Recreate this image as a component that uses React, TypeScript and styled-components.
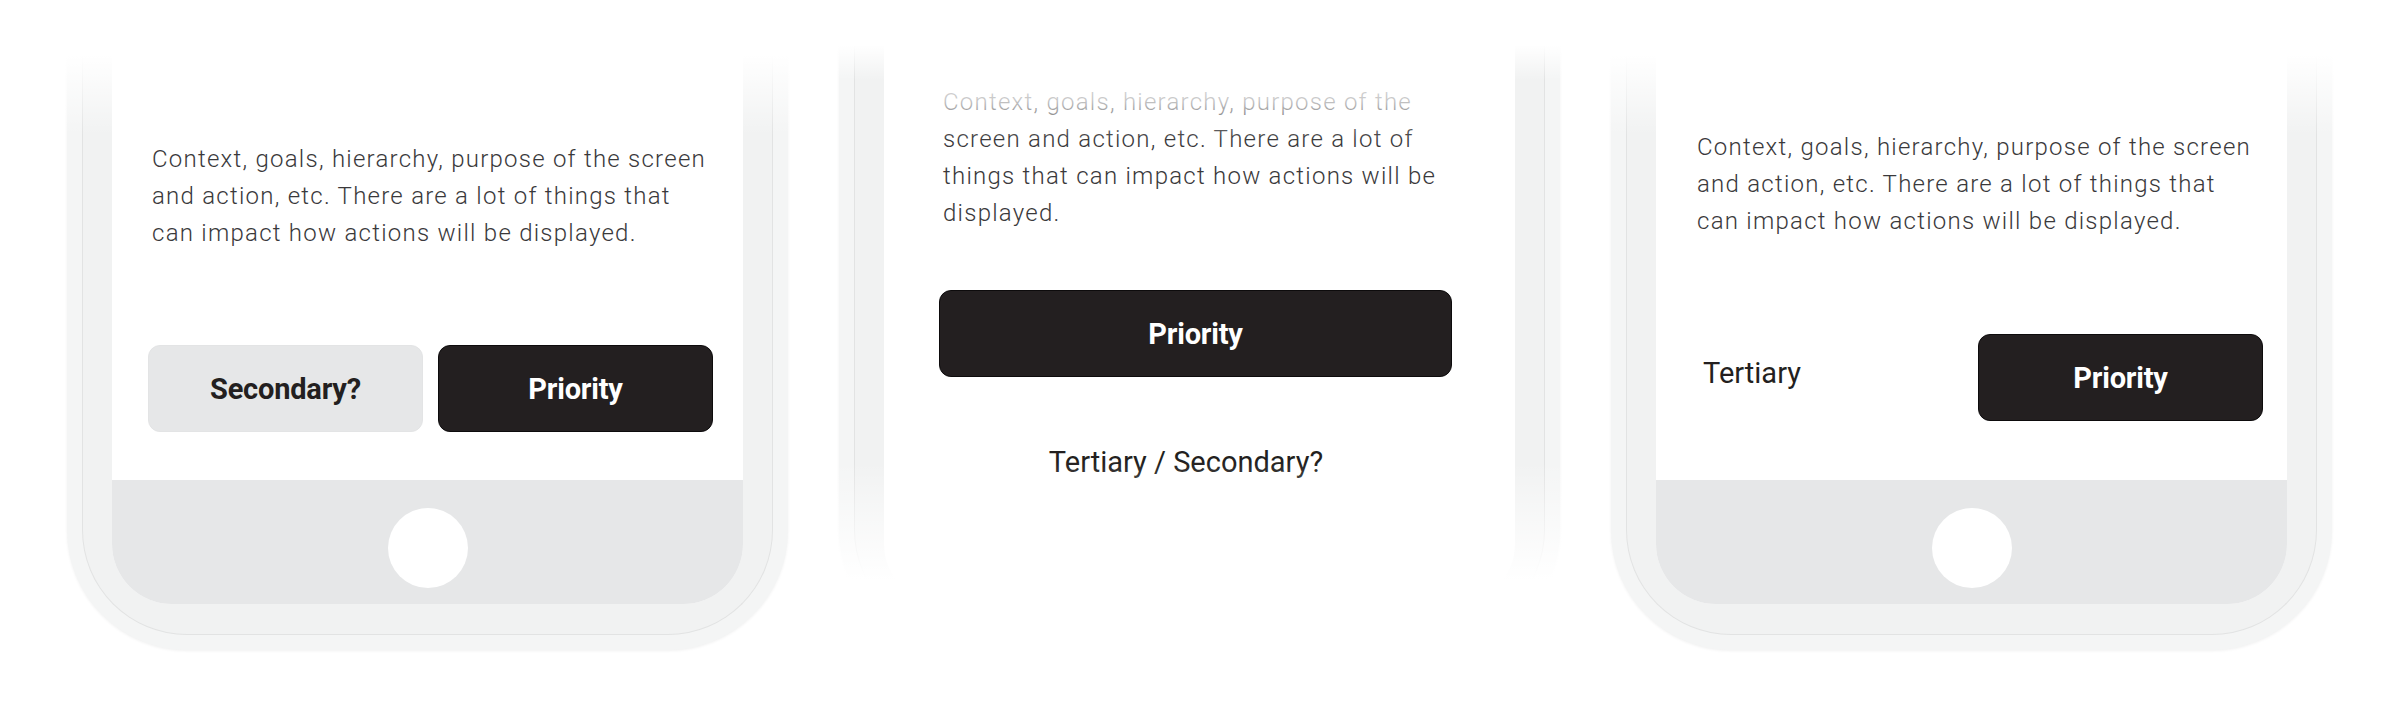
import styled, { createGlobalStyle } from "styled-components";

const GlobalStyle = createGlobalStyle`
  html, body {
    margin: 0;
    padding: 0;
    background: #fff;
  }
  body {
    font-family: Roboto, "Liberation Sans", Arial, sans-serif;
  }
`;

const COPY =
  "Context, goals, hierarchy, purpose of the screen and action, etc. There are a lot of things that can impact how actions will be displayed.";

export default function App() {
  return (
    <>
      <GlobalStyle />
      <Page>
        {/* two buttons side by side */}
        <Phone>
          <Body>
            <Bezel>
              <Screen>
                <Content $top={141} $left={36} $right={30}>
                  <Copy $indent={4} $wrap={566}>
                    {COPY}
                  </Copy>
                  <ActionRow $top={93}>
                    <Button $variant="secondary">Secondary?</Button>
                    <Button $variant="priority">Priority</Button>
                  </ActionRow>
                </Content>
                <HomeArea>
                  <HomeButton />
                </HomeArea>
              </Screen>
            </Bezel>
          </Body>
          <FrameFade $topEnd={135} />
        </Phone>

        {/* stacked: priority first, text link under it */}
        <Phone>
          <Body>
            <Bezel>
              <Screen>
                <Content $top={84} $left={55} $right={63}>
                  <Copy $indent={4} $wrap={512}>
                    {COPY}
                  </Copy>
                  <Stack $top={58}>
                    <Button $variant="priority">Priority</Button>
                    <TextAction $shift={19}>Tertiary / Secondary?</TextAction>
                  </Stack>
                </Content>
                <ScreenFade />
              </Screen>
            </Bezel>
          </Body>
          <FrameFade $topEnd={80} $bottomStart={462} />
        </Phone>

        {/* text action left, priority right */}
        <Phone>
          <Body>
            <Bezel>
              <Screen>
                <Content $top={129} $left={41} $right={24}>
                  <Copy $indent={0} $wrap={566}>
                    {COPY}
                  </Copy>
                  <ActionRow $top={94}>
                    <TextAction $indent={6}>Tertiary</TextAction>
                    <Button $variant="priority" $width={285}>
                      Priority
                    </Button>
                  </ActionRow>
                </Content>
                <HomeArea>
                  <HomeButton />
                </HomeArea>
              </Screen>
            </Bezel>
          </Body>
          <FrameFade $topEnd={135} />
        </Phone>
      </Page>
    </>
  );
}

const Page = styled.main`
  width: 2400px;
  height: 708px;
  box-sizing: border-box;
  padding-left: 67px;
  display: flex;
  gap: 51px;
  overflow: hidden;
  background: #fff;
`;

const Phone = styled.section`
  position: relative;
  flex: none;
  width: 721px;
  height: 650px;
`;

const Body = styled.div`
  height: 100%;
  box-sizing: border-box;
  display: flex;
  padding: 0 15px 15px;
  background: #f4f5f5;
  border-radius: 0 0 120px 120px;
  box-shadow: 0 1px 3px rgba(0, 0, 0, 0.06);
`;

const Bezel = styled.div`
  flex: 1;
  min-width: 0;
  display: flex;
  padding: 0 29px 30px;
  background: #f1f2f2;
  border: 1px solid #e2e3e3;
  border-top: none;
  border-radius: 0 0 105px 105px;
`;

const Screen = styled.div`
  position: relative;
  flex: 1;
  min-width: 0;
  display: flex;
  flex-direction: column;
  background: #fff;
  border-radius: 0 0 60px 60px;
  overflow: hidden;
`;

const Content = styled.div<{ $top: number; $left: number; $right: number }>`
  flex: 1;
  min-width: 0;
  display: flex;
  flex-direction: column;
  padding: ${(p) => p.$top}px ${(p) => p.$right}px 0 ${(p) => p.$left}px;
`;

const Copy = styled.p<{ $indent: number; $wrap: number }>`
  width: ${(p) => p.$wrap}px;
  margin: 0;
  padding-left: ${(p) => p.$indent}px;
  font-size: 24px;
  font-weight: 300;
  line-height: 37px;
  letter-spacing: 1.25px;
  color: #3a393b;
`;

const ActionRow = styled.div<{ $top: number }>`
  display: flex;
  align-items: center;
  justify-content: space-between;
  gap: 15px;
  margin-top: ${(p) => p.$top}px;
`;

const Stack = styled.div<{ $top: number }>`
  display: flex;
  flex-direction: column;
  align-items: center;
  gap: 68px;
  margin-top: ${(p) => p.$top}px;
  & > button {
    flex: none;
    align-self: stretch;
  }
`;

const Button = styled.button<{
  $variant: "priority" | "secondary";
  $width?: number;
}>`
  flex: ${(p) => (p.$width ? `0 0 ${p.$width}px` : "1 1 0")};
  min-width: 0;
  height: 87px;
  box-sizing: border-box;
  border-radius: 12px;
  font-family: Roboto, "Liberation Sans", Arial, sans-serif;
  font-size: 29px;
  font-weight: 700;
  letter-spacing: -0.2px;
  cursor: pointer;
  background: ${(p) => (p.$variant === "priority" ? "#231f20" : "#e6e7e8")};
  color: ${(p) => (p.$variant === "priority" ? "#fff" : "#231f20")};
  border: ${(p) =>
    p.$variant === "priority" ? "1.5px solid #0d0b0c" : "1px solid #e3e4e5"};
`;

const TextAction = styled.span<{ $indent?: number; $shift?: number }>`
  padding-left: ${(p) => p.$indent ?? 0}px;
  margin-right: ${(p) => p.$shift ?? 0}px;
  margin-bottom: ${(p) => (p.$indent ? 9 : 0)}px;
  font-size: 29px;
  font-weight: 400;
  color: #231f20;
  white-space: nowrap;
`;

const HomeArea = styled.div`
  flex: none;
  height: 124px;
  box-sizing: border-box;
  padding-top: 28px;
  display: flex;
  justify-content: center;
  background: #e6e7e8;
`;

const HomeButton = styled.div`
  width: 80px;
  height: 80px;
  border-radius: 50%;
  background: #fff;
`;

const ScreenFade = styled.div`
  position: absolute;
  inset: 0;
  pointer-events: none;
  background: linear-gradient(
    to bottom,
    #fff 0px,
    #fff 50px,
    rgba(255, 255, 255, 0.72) 100px,
    rgba(255, 255, 255, 0) 140px
  );
`;

const FrameFade = styled.div<{ $topEnd: number; $bottomStart?: number }>`
  position: absolute;
  inset: 0 -6px -6px;
  pointer-events: none;
  background: ${(p) =>
    p.$bottomStart
      ? `linear-gradient(to bottom, #fff 0px, #fff 45px, rgba(255,255,255,0) ${p.$topEnd}px, rgba(255,255,255,0) ${p.$bottomStart}px, #fff ${p.$bottomStart + 118}px)`
      : `linear-gradient(to bottom, #fff 0px, #fff 55px, rgba(255,255,255,0) ${p.$topEnd}px)`};
`;
